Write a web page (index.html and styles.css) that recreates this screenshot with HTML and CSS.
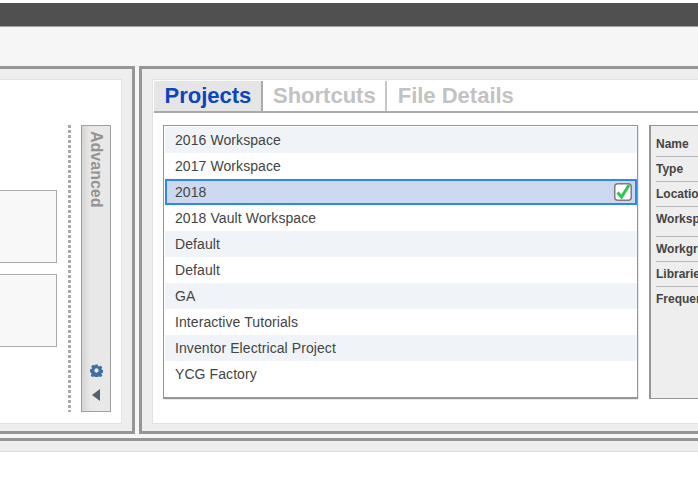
FILE: index.html
```
<!DOCTYPE html>
<html lang="en">
<head>
<meta charset="utf-8">
<title>Projects</title>
<link rel="stylesheet" href="styles.css">
</head>
<body>
<header class="topbar"></header>
<main class="workarea">
  <section class="panel panel-left">
    <div class="card card-left">
      <div class="boxes">
        <div class="box"></div>
        <div class="box"></div>
      </div>
      <div class="dots"></div>
      <aside class="side-tab">
        <span class="side-label">Advanced</span>
        <svg class="gear" viewBox="0 0 14 14" width="13" height="13"><path fill="#3f6ea5" fill-rule="evenodd" d="M5.600 0.500h2.800l.3 1.700 1.100.5 1.500-1 2 2-1 1.500.5 1.100 1.700.3v2.800l-1.700.3-.5 1.100 1 1.500-2 2-1.500-1-1.100.5-.3 1.700H5.600l-.3-1.700-1.100-.5-1.500 1-2-2 1-1.500-.5-1.100L0 8.400V5.600l1.700-.3.5-1.100-1-1.500 2-2 1.500 1 1.100-.5zM7 4.700a2.300 2.300 0 1 0 0 4.600 2.300 2.300 0 0 0 0-4.600z"/></svg>
        <svg class="arrow" viewBox="0 0 10 12" width="10" height="12"><path fill="#55606b" d="M9 0v12L1 6z"/></svg>
      </aside>
    </div>
  </section>
  <section class="panel panel-right">
    <div class="card card-right">
      <nav class="tabs">
        <span class="tab tab-active">Projects</span>
        <span class="tab">Shortcuts</span>
        <span class="tab tab-last">File Details</span>
      </nav>
      <div class="content">
        <ul class="list">
          <li class="row row-alt">2016 Workspace</li>
          <li class="row">2017 Workspace</li>
          <li class="row row-selected">2018
            <svg class="check" viewBox="0 0 18 18" width="18" height="18"><rect x="0.750" y="0.750" width="16.500" height="16.500" rx="3" fill="#fff" stroke="#7d7d7d" stroke-width="1.500"/><path d="M3.500 9.500l4 4.500 7.500-12" fill="none" stroke="#2cc84d" stroke-width="3"/></svg>
          </li>
          <li class="row">2018 Vault Workspace</li>
          <li class="row row-alt">Default</li>
          <li class="row">Default</li>
          <li class="row row-alt">GA</li>
          <li class="row">Interactive Tutorials</li>
          <li class="row row-alt">Inventor Electrical Project</li>
          <li class="row">YCG Factory</li>
        </ul>
        <dl class="details">
          <dt class="detail">Name</dt>
          <dt class="detail">Type</dt>
          <dt class="detail">Location</dt>
          <dt class="detail detail-tall">Workspace</dt>
          <dt class="detail">Workgroup</dt>
          <dt class="detail">Libraries</dt>
          <dt class="detail detail-last">Frequently</dt>
        </dl>
      </div>
    </div>
  </section>
</main>
<div class="footer-strip"></div>
</body>
</html>
```
FILE: styles.css
```
* { box-sizing: border-box; }
html, body { margin: 0; padding: 0; }
body {
  width: 698px;
  height: 483px;
  overflow: hidden;
  background: #fff;
  font-family: "Liberation Sans", Arial, sans-serif;
}
.topbar {
  margin-top: 3px;
  height: 24px;
  background: #505050;
  border-bottom: 1px solid #a0a0a0;
}
.workarea {
  height: 411px;
  display: flex;
  gap: 4px;
  padding-top: 39px;
  background: #f6f6f6;
}
.panel {
  height: 368px;
  padding: 10px;
  background: #eee;
  border: 3px solid #969696;
}
.panel-left { flex: 0 0 135px; border-left: 0; padding-left: 0; }
.panel-right { flex: 1 1 0; min-width: 0; border-right: 0; padding-right: 0; }
.card {
  height: 345px;
  background: #fff;
  border: 1px solid #e2e2e2;
}
.card-left {
  display: flex;
  border-left: 0;
  padding-top: 45px;
}
.boxes {
  flex: 0 0 57px;
  padding-top: 65px;
  display: flex;
  flex-direction: column;
  gap: 11px;
}
.box {
  height: 73px;
  background: #f8f8f8;
  border: 1px solid #aaa;
  border-left: 0;
}
.dots {
  width: 3px;
  height: 287px;
  margin-left: 11px;
  background: repeating-linear-gradient(to bottom, #aaa 0 3px, transparent 3px 5px);
}
.side-tab {
  width: 30px;
  height: 287px;
  margin-left: 10px;
  background: linear-gradient(to right, #d4d4d4, #e8e8e8 30%, #e8e8e8);
  border: 1px solid #a0a0a0;
  display: flex;
  flex-direction: column;
  align-items: center;
}
.side-label {
  writing-mode: vertical-rl;
  font-size: 16px;
  font-weight: bold;
  color: #949494;
  margin-top: 5px;
  line-height: 26px;
}
.gear { margin-top: auto; }
.arrow { margin-top: 12px; margin-bottom: 10px; }
.card-right { padding: 1px 0 0 1px; border-right: 0; }
.tabs {
  display: flex;
  height: 32px;
  border-bottom: 2px solid #aaa;
}
.tab {
  height: 30px;
  padding: 0 9px 0 10px;
  font-size: 22px;
  line-height: 29px;
  font-weight: bold;
  color: #c2c2c2;
  white-space: nowrap;
  border-right: 2px solid #c6c6c6;
}
.tab-active {
  width: 109px;
  padding-left: 10.5px;
  color: #0a46c2;
  background: #e5e5e5;
  border-right-color: #aaa;
}
.tab-last { padding-left: 11px; border-right: 0; }
.content {
  display: flex;
  gap: 11px;
  padding: 12px 0 0 9px;
}
.list {
  flex: 0 0 475px;
  height: 274px;
  margin: 0;
  padding: 1px 0 1px 1px;
  list-style: none;
  border: 1px solid #969696;
  border-bottom-width: 2px;
  box-shadow: 1px 1px 0 #eaeaea;
}
.row {
  height: 26px;
  padding-left: 10px;
  display: flex;
  align-items: center;
  justify-content: space-between;
  font-size: 14px;
  letter-spacing: 0.08px;
  color: #444;
}
.row-alt { background: #f0f4f8; }
.row-selected {
  padding-left: 8px;
  padding-right: 3px;
  background: #ccd9f0;
  border: 2px solid #2f86f0;
}
.check { display: block; }
.details {
  flex: 1 1 0;
  min-width: 0;
  height: 274px;
  margin: 0;
  padding: 6px 0 0 5px;
  background: #eee;
  border: 1px solid #969696;
  border-left-width: 2px;
  border-right: 0;
}
.detail {
  height: 25px;
  overflow: hidden;
  white-space: nowrap;
  font-size: 12px;
  font-weight: bold;
  line-height: 25px;
  color: #444;
  border-bottom: 1px solid #b5b5b5;
}
.detail-tall { height: 30px; }
.detail-last { border-bottom: 0; }
.footer-strip {
  height: 14px;
  margin-top: 0;
  background: #eee;
  border-top: 3px solid #969696;
  border-bottom: 1px solid #e0e0e0;
}
```
